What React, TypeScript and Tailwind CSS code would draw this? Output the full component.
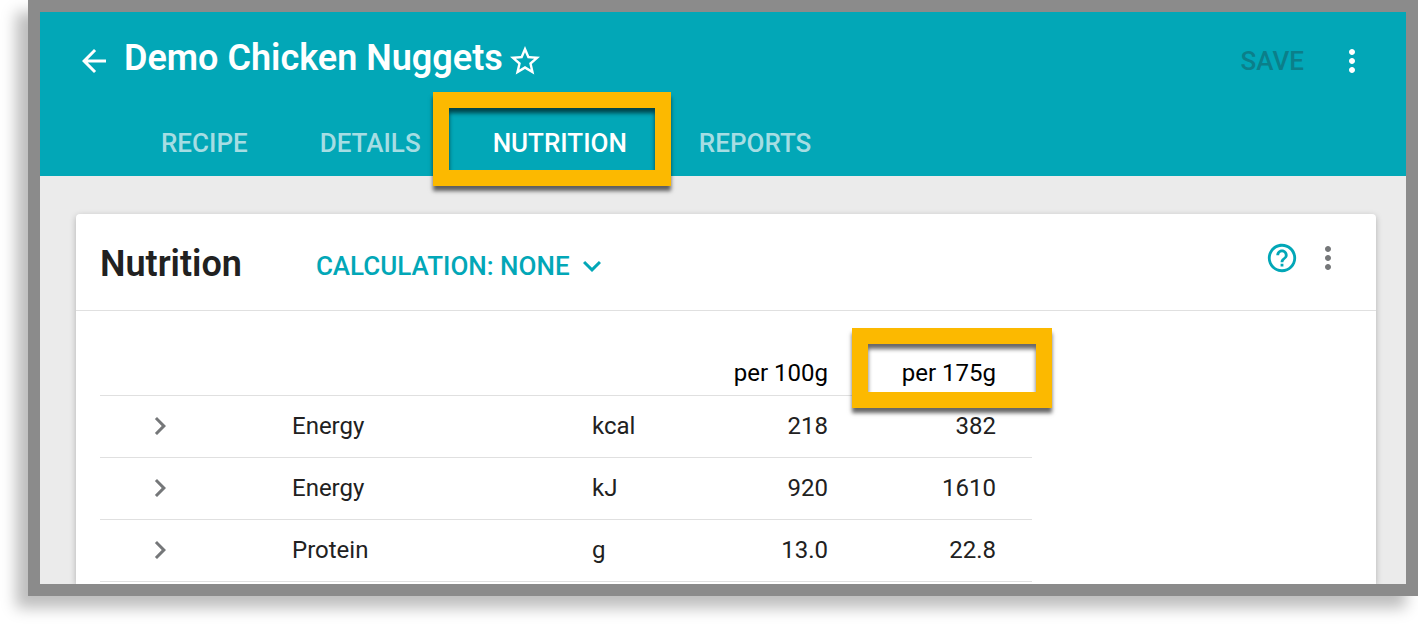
import {
  MdArrowBack,
  MdChevronRight,
  MdExpandMore,
  MdHelpOutline,
  MdMoreVert,
  MdStarOutline,
} from "react-icons/md"

interface Nutrient {
  name: string
  unit: string
  per100: string
  perServing: string
}

const tabs = ["Recipe", "Details", "Nutrition", "Reports"]

const nutrients: Nutrient[] = [
  { name: "Energy", unit: "kcal", per100: "218", perServing: "382" },
  { name: "Energy", unit: "kJ", per100: "920", perServing: "1610" },
  { name: "Protein", unit: "g", per100: "13.0", perServing: "22.8" },
]

// Yellow callout frame laid over the element it points at
function Callout({ className }: { className: string }) {
  return (
    <span
      aria-hidden="true"
      className={`pointer-events-none absolute z-10 border-16 border-[#fcb900] shadow-[0_5px_4px_rgba(0,0,0,0.6),inset_0_5px_4px_rgba(0,0,0,0.6)] ${className}`}
    />
  )
}

function AppHeader() {
  return (
    <header className="bg-[#02a7b7] text-white">
      <div className="flex h-[98px] items-center pl-9 pr-9">
        <button type="button" aria-label="Back">
          <MdArrowBack size={36} />
        </button>
        <h1 className="ml-3 pb-[6px] text-4xl font-semibold">Demo Chicken Nuggets</h1>
        <button type="button" aria-label="Add to favourites" className="ml-1">
          <MdStarOutline size={36} />
        </button>
        <button type="button" disabled className="ml-auto text-[26px] font-medium text-[#0b7f8a] uppercase">
          Save
        </button>
        <button type="button" aria-label="More options" className="ml-[30px]">
          <MdMoreVert size={36} />
        </button>
      </div>
      <nav className="flex pl-[85px]">
        {tabs.map((tab) => (
          <button
            key={tab}
            type="button"
            className={`relative h-[66px] px-9 text-[26px] font-medium uppercase ${
              tab === "Nutrition" ? "text-white" : "text-[#a6dde3]"
            }`}
          >
            {tab}
            {tab === "Nutrition" && <Callout className="-top-[18px] -right-2 -bottom-[10px] -left-6" />}
          </button>
        ))}
      </nav>
    </header>
  )
}

function NutritionTable() {
  return (
    <table className="w-full max-w-[932px] table-fixed text-2xl text-[#212121]">
      <colgroup>
        <col className="w-[192px]" />
        <col className="w-[300px]" />
        <col className="w-[104px]" />
        <col className="w-[168px]" />
        <col className="w-[168px]" />
      </colgroup>
      <thead>
        <tr className="h-[84px] border-b border-[#e0e0e0] align-bottom text-black">
          <td />
          <td />
          <td />
          <th className="pr-9 pb-[6px] text-right font-normal">per 100g</th>
          <th className="relative pr-9 pb-[6px] text-right font-normal">
            per 175g
            <Callout className="top-[17px] -right-5 -bottom-[13px] -left-3" />
          </th>
        </tr>
      </thead>
      <tbody>
        {nutrients.map((nutrient) => (
          <tr key={nutrient.unit} className="h-[62px] border-b border-[#e0e0e0]">
            <td className="pl-[42px]">
              <button
                type="button"
                aria-label={`Expand ${nutrient.name} (${nutrient.unit})`}
                className="block text-[#757779]"
              >
                <MdChevronRight size={36} />
              </button>
            </td>
            <td>{nutrient.name}</td>
            <td>{nutrient.unit}</td>
            <td className="pr-9 text-right">{nutrient.per100}</td>
            <td className="pr-9 text-right">{nutrient.perServing}</td>
          </tr>
        ))}
      </tbody>
    </table>
  )
}

export default function App() {
  return (
    <div className="flex min-h-screen overflow-hidden bg-white pb-7 pl-7 font-['Roboto','Open_Sans',sans-serif]">
      <div className="flex flex-1 flex-col border-12 border-[#8b8b8b] bg-[#ebebeb] shadow-[-12px_12px_14px_rgba(0,0,0,0.26)]">
        <AppHeader />
        <main className="flex flex-1 flex-col overflow-hidden pt-[38px] pr-[30px] pl-9">
          <section className="flex-1 rounded-t bg-white shadow-[0_2px_6px_rgba(0,0,0,0.25)]">
            <div className="flex h-[97px] items-center border-b border-[#e0e0e0] pr-[30px] pl-6">
              <h2 className="pt-1 text-4xl font-semibold text-[#212121]">Nutrition</h2>
              <button
                type="button"
                className="ml-[74px] flex items-center gap-1 pt-2 text-[26px] font-medium text-[#02a7b7] uppercase"
              >
                Calculation: None
                <MdExpandMore size={36} />
              </button>
              <div className="ml-auto flex items-center gap-[11px] pb-2">
                <button type="button" aria-label="Help" className="text-[#02a7b7]">
                  <MdHelpOutline size={34} />
                </button>
                <button type="button" aria-label="Nutrition options" className="text-[#757779]">
                  <MdMoreVert size={36} />
                </button>
              </div>
            </div>
            <div className="px-6">
              <NutritionTable />
            </div>
          </section>
        </main>
      </div>
    </div>
  )
}
